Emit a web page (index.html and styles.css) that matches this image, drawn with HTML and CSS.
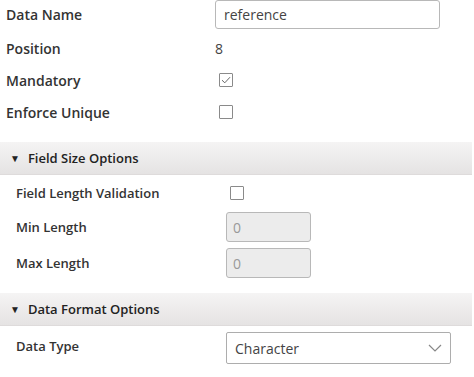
FILE: index.html
```html
<!DOCTYPE html>
<html lang="en">
<head>
    <meta charset="UTF-8">
    <title>Field Properties</title>
    <link rel="stylesheet" href="styles.css">
</head>
<body>
<div class="props">
    <div class="row row-first">
        <span class="label">Data Name</span>
        <input class="text-input" type="text" value="reference">
    </div>
    <div class="row">
        <span class="label">Position</span>
        <span class="value">8</span>
    </div>
    <div class="row">
        <span class="label">Mandatory</span>
        <span class="check checked">
            <svg width="10" height="8" viewBox="0 0 10 8"><path d="M1 4.2 L3.8 6.8 L9 1.2" fill="none" stroke="#666" stroke-width="1"/></svg>
        </span>
    </div>
    <div class="row">
        <span class="label">Enforce Unique</span>
        <span class="check"></span>
    </div>
</div>

<div class="section">
    <div class="section-head"><span class="caret">&#9660;</span>Field Size Options</div>
    <div class="section-body">
        <div class="srow srow-check">
            <span class="slabel">Field Length Validation</span>
            <span class="check"></span>
        </div>
        <div class="srow">
            <span class="slabel">Min Length</span>
            <input class="num-input" type="text" value="0" disabled>
        </div>
        <div class="srow">
            <span class="slabel">Max Length</span>
            <input class="num-input" type="text" value="0" disabled>
        </div>
    </div>
</div>

<div class="section">
    <div class="section-head"><span class="caret">&#9660;</span>Data Format Options</div>
    <div class="section-body section-body-format">
        <div class="srow srow-select">
            <span class="slabel">Data Type</span>
            <div class="select">
                <span>Character</span>
                <svg width="14" height="8" viewBox="0 0 14 8"><path d="M1 1 L7 7 L13 1" fill="none" stroke="#888" stroke-width="1.2"/></svg>
            </div>
        </div>
    </div>
</div>
</body>
</html>
```

FILE: styles.css
```css
body {
    margin: 0;
    padding: 0;
    background: #fff;
    font-family: "Open Sans", "Noto Sans", sans-serif;
    color: #333;
}
.props {
    padding: 0 0 14px 6px;
}
.row {
    display: grid;
    grid-template-columns: 209px 1fr;
    align-items: center;
    height: 32px;
}
.row-first {
    height: 29px;
    margin-bottom: 3px;
}
.label {
    font-size: 14px;
    font-weight: 600;
    color: #333;
}
.value {
    font-size: 14px;
    color: #444;
}
.text-input {
    box-sizing: border-box;
    width: 225px;
    height: 29px;
    margin: 0;
    padding: 0 8px;
    border: 1px solid #b8b8b8;
    border-radius: 3px;
    font-family: inherit;
    font-size: 14px;
    color: #444;
    background: #fff;
}
.check {
    box-sizing: border-box;
    width: 14px;
    height: 14px;
    margin-left: 4px;
    border: 1px solid #8a8a8a;
    border-radius: 1px;
    display: flex;
    align-items: center;
    justify-content: center;
    background: #fff;
}
.section-head {
    height: 33px;
    display: flex;
    align-items: center;
    padding-left: 10px;
    margin-right: 2px;
    background: linear-gradient(#f5f4f4, #e5e3e3);
    border-bottom: 1px solid #dedbdb;
    box-sizing: border-box;
    font-size: 13px;
    font-weight: 600;
    color: #222;
}
.caret {
    font-size: 10px;
    margin-right: 8px;
    color: #222;
}
.section-body {
    padding: 2px 0 15px 16px;
}
.section-body-format {
    padding-top: 6px;
    padding-bottom: 0;
}
.srow {
    display: grid;
    grid-template-columns: 210px 1fr;
    align-items: center;
    height: 30px;
    margin-bottom: 6px;
}
.srow:last-child {
    margin-bottom: 0;
}
.srow-check {
    height: 32px;
    margin-bottom: 3px;
}
.srow-select {
    height: 32px;
}
.srow-select .slabel {
    margin-top: -5px;
}
.slabel {
    font-size: 13px;
    font-weight: 600;
    color: #333;
}
.num-input {
    box-sizing: border-box;
    width: 85px;
    height: 30px;
    margin: 0;
    padding: 0 6px;
    border: 1px solid #b8b8b8;
    border-radius: 3px;
    background: #ececec;
    font-family: inherit;
    font-size: 14px;
    color: #999;
}
.select {
    box-sizing: border-box;
    width: 225px;
    height: 32px;
    border: 1px solid #adadad;
    border-radius: 2px;
    display: flex;
    align-items: center;
    justify-content: space-between;
    padding: 0 8px 0 8px;
    font-size: 14px;
    color: #444;
}
```
